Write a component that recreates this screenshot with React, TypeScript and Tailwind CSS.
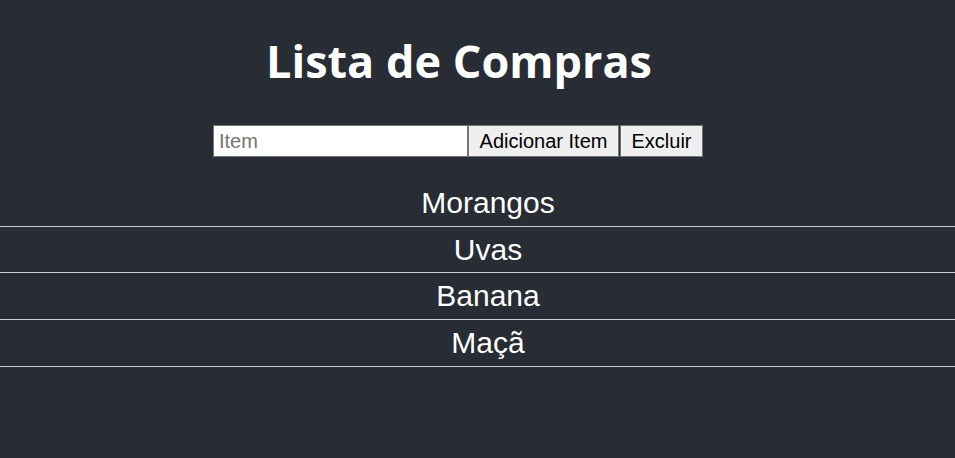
import React, { useState } from 'react';

const initialItems = ['Morangos', 'Uvas', 'Banana', 'Maçã'];

export default function App() {
    const [items, setItems] = useState<string[]>(initialItems);
    const [text, setText] = useState('');

    const addItem = () => {
        if (!text.trim()) return;
        setItems([...items, text.trim()]);
        setText('');
    };

    return (
        <div className="min-h-screen bg-[#282c34] text-white font-['Liberation_Sans',Arial,sans-serif]">
            {/* Header + form */}
            <div className="flex flex-col items-center pr-[37px]">
                <h1 className="mt-[30px] text-[45px] leading-[62px] font-bold font-['Open_Sans',sans-serif]">
                    Lista de Compras
                </h1>
                <div className="mt-[33px] mr-[2px] flex items-center text-[20px] text-black">
                    <input
                        value={text}
                        onChange={(e) => setText(e.target.value)}
                        placeholder="Item"
                        className="h-[32px] w-[255px] border border-[#767676] bg-white px-[5px] placeholder:text-[#757575] outline-none"
                    />
                    <button
                        onClick={addItem}
                        className="h-[32px] w-[151px] border border-[#767676] bg-[#efefef]"
                    >
                        Adicionar Item
                    </button>
                    <button
                        onClick={() => setItems([])}
                        className="ml-[1px] h-[32px] w-[83px] border border-[#767676] bg-[#efefef]"
                    >
                        Excluir
                    </button>
                </div>
            </div>

            {/* Items */}
            <ul className="mt-[23px]">
                {items.map((item, i) => (
                    <li
                        key={i}
                        className="h-[46.67px] border-b border-[#cccccc] pl-[21px] text-center text-[30px] leading-[45px]"
                    >
                        {item}
                    </li>
                ))}
            </ul>
        </div>
    );
}
